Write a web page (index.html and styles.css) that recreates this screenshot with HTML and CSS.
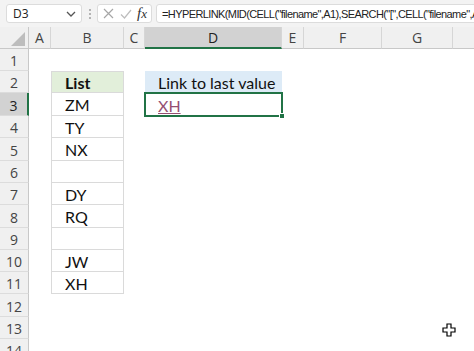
FILE: index.html
```html
<!DOCTYPE html>
<html lang="en">
<head>
    <meta charset="UTF-8">
    <title>Link to last value</title>
    <link rel="stylesheet" href="styles.css">
</head>
<body>
    <div class="app">
        <div class="formula-bar">
            <div class="name-box">
                <span>D3</span>
                <svg class="chevron" width="10" height="6" viewBox="0 0 10 6"><path d="M1 1 L5 5 L9 1" fill="none" stroke="#555" stroke-width="1.3"/></svg>
            </div>
            <div class="grip"><span></span><span></span><span></span></div>
            <div class="fn-box">
                <svg width="11" height="11" viewBox="0 0 11 11"><path d="M1 1 L10 10 M10 1 L1 10" stroke="#a6a6a6" stroke-width="1.2"/></svg>
                <svg width="12" height="10" viewBox="0 0 12 10"><path d="M1 5.5 L4.5 9 L11 1" fill="none" stroke="#bdbdbd" stroke-width="1.2"/></svg>
                <span class="fx">f<i>x</i></span>
            </div>
            <div class="formula">=HYPERLINK(MID(CELL("filename",A1),SEARCH("[",CELL("filename",A1)),SEARCH("]",CELL("filename",A1))-SEARCH("[",CELL("filename",A1))+1)&amp;"Sheet1!B"&amp;MATCH(2,1/(B:B&lt;&gt;"")),LOOKUP(2,1/(B:B&lt;&gt;""),B:B))</div>
        </div>

        <div class="sheet">
            <div class="row head">
                <div class="corner"><span class="tri"></span></div>
                <div class="ch">A</div>
                <div class="ch">B</div>
                <div class="ch">C</div>
                <div class="ch sel">D</div>
                <div class="ch">E</div>
                <div class="ch">F</div>
                <div class="ch">G</div>
                <div class="ch"></div>
            </div>
            <div class="row"><div class="rh">1</div></div>
            <div class="row">
                <div class="rh">2</div>
                <div class="cell col-b top list">List</div>
                <div class="cell col-d d-head">Link to last value</div>
            </div>
            <div class="row tall">
                <div class="rh sel">3</div>
                <div class="cell col-b">ZM</div>
                <div class="cell col-d active"><a href="#B11">XH</a></div>
            </div>
            <div class="row"><div class="rh">4</div><div class="cell col-b">TY</div></div>
            <div class="row tall"><div class="rh">5</div><div class="cell col-b">NX</div></div>
            <div class="row"><div class="rh">6</div><div class="cell col-b"></div></div>
            <div class="row"><div class="rh">7</div><div class="cell col-b">DY</div></div>
            <div class="row tall"><div class="rh">8</div><div class="cell col-b">RQ</div></div>
            <div class="row"><div class="rh">9</div><div class="cell col-b"></div></div>
            <div class="row"><div class="rh">10</div><div class="cell col-b">JW</div></div>
            <div class="row"><div class="rh">11</div><div class="cell col-b">XH</div></div>
            <div class="row tall"><div class="rh">12</div></div>
            <div class="row"><div class="rh">13</div></div>
            <div class="row"><div class="rh">14</div></div>
        </div>

        <svg class="cursor" width="14" height="14" viewBox="0 0 14 14">
            <path d="M5 1 H9 V5 H13 V9 H9 V13 H5 V9 H1 V5 H5 Z" fill="#fff" stroke="#000" stroke-width="1.2"/>
        </svg>
    </div>
</body>
</html>
```

FILE: styles.css
```css
body {
    margin: 0;
    padding: 0;
    background-color: #FFFFFF;
    font-family: 'Open Sans', 'Noto Sans', sans-serif;
}
.app {
    position: relative;
    width: 474px;
    height: 351px;
    overflow: hidden;
}

/* formula bar */
.formula-bar {
    height: 27px;
    background-color: #F3F3F3;
    display: flex;
    align-items: flex-start;
    padding-top: 4px;
    box-sizing: border-box;
}
.name-box, .fn-box, .formula {
    height: 19px;
    background-color: #FFFFFF;
    border: 1px solid #DCDCDC;
    border-radius: 3px;
    box-sizing: border-box;
    display: flex;
    align-items: center;
}
.name-box {
    width: 76px;
    margin-left: 6px;
    padding: 0 5px 0 6px;
    justify-content: space-between;
    font-size: 12px;
    color: #222222;
}
.grip {
    width: 15px;
    display: flex;
    flex-direction: column;
    align-items: center;
    gap: 2px;
    padding-top: 5px;
}
.grip span {
    width: 2px;
    height: 2px;
    background-color: #B4B4B4;
}
.fn-box {
    width: 55px;
    padding: 0 3px 0 5px;
    justify-content: space-between;
}
.fx {
    font-family: 'Liberation Serif', serif;
    font-style: italic;
    font-size: 15px;
    color: #333333;
    padding-right: 1px;
}
.fx i {
    font-size: 13px;
}
.formula {
    flex: 1;
    margin-left: 4px;
    margin-right: -20px;
    padding-left: 5px;
    font-family: 'Liberation Sans', Arial, sans-serif;
    font-size: 11px;
    letter-spacing: -0.6px;
    color: #222222;
    white-space: nowrap;
    overflow: hidden;
}

/* grid */
.row {
    display: grid;
    grid-template-columns: 29px 22px 73px 21px 137px 22px 78px 71px 60px;
    height: 22px;
}
.row.tall {
    height: 23px;
}
.row.head {
    height: 22px;
    background-color: #F0F0F0;
}
.corner {
    position: relative;
    border-right: 1px solid #C8C8C8;
    border-bottom: 1px solid #C8C8C8;
}
.tri {
    position: absolute;
    right: 3px;
    bottom: 2px;
    width: 0;
    height: 0;
    border-left: 14px solid transparent;
    border-bottom: 14px solid #BDBDBD;
}
.ch {
    border-right: 1px solid #D6D6D6;
    border-bottom: 1px solid #C8C8C8;
    display: flex;
    justify-content: center;
    align-items: center;
    font-size: 14px;
    color: #444444;
}
.ch.sel {
    background-color: #D2D2D2;
    border-bottom: 2px solid #217346;
    color: #222222;
}
.rh {
    grid-column: 1;
    background-color: #F0F0F0;
    border-right: 1px solid #C8C8C8;
    border-bottom: 1px solid #DCDCDC;
    display: flex;
    justify-content: center;
    align-items: center;
    padding-top: 2px;
    box-sizing: border-box;
    font-size: 14px;
    color: #444444;
}
.rh.sel {
    background-color: #D2D2D2;
    border-right: 2px solid #217346;
    color: #222222;
}

/* cells */
.cell {
    display: flex;
    align-items: center;
    padding-left: 13px;
    padding-top: 1px;
    font-family: 'Lato', 'Open Sans', sans-serif;
    font-size: 16px;
    color: #111111;
    box-sizing: border-box;
}
.col-b {
    grid-column: 3;
    border-left: 1px solid #DADADA;
    border-right: 1px solid #DADADA;
    border-bottom: 1px solid #DADADA;
}
.col-b.top {
    border-top: 1px solid #DADADA;
}
.list {
    background-color: #E2EFDA;
    font-weight: bold;
}
.col-d {
    grid-column: 5;
}
.d-head {
    background-color: #DDEBF7;
}
.active {
    position: relative;
    outline: 2px solid #217346;
    outline-offset: -1px;
}
.active::after {
    content: '';
    position: absolute;
    right: -3px;
    bottom: -3px;
    width: 4px;
    height: 4px;
    background-color: #217346;
    border: 1px solid #FFFFFF;
}
.active a {
    color: #954F72;
    text-decoration: underline;
}

.cursor {
    position: absolute;
    left: 442px;
    top: 323px;
}
```
